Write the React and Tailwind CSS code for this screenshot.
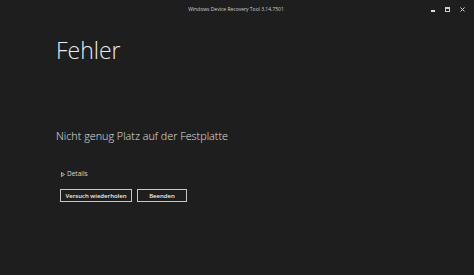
export default function App() {
  return (
    <div className="w-[474px] h-[275px] bg-[#1e1e1e] text-[#e6e6e6] relative overflow-hidden" style={{ fontFamily: '"Open Sans", "Noto Sans", sans-serif' }}>
      <div className="h-[20px] flex items-center justify-center relative">
        <span className="text-[5px] text-[#cfcfcf] mt-[-1px] ml-[-2px]">Windows Device Recovery Tool 3.14.7501</span>
        <div className="absolute right-[9px] top-[7px] flex items-center gap-[10px]">
          <div className="w-[4px] h-[1.5px] bg-[#dcdcdc] mt-[3px]"></div>
          <div className="w-[5px] h-[5px] border border-[#cfcfcf] border-t-2"></div>
          <svg width="5" height="5" viewBox="0 0 5 5"><path d="M0.5 0.5L4.5 4.5M4.5 0.5L0.5 4.5" stroke="#d0d0d0" strokeWidth="1" /></svg>
        </div>
      </div>
      <div className="pl-[56px]">
        <div className="mt-[14px] text-[23px] font-light leading-[32px] text-[#ececec]">Fehler</div>
        <div className="mt-[62px] text-[10.8px] font-light leading-[16px] text-[#e0e0e0]">Nicht genug Platz auf der Festplatte</div>
        <div className="mt-[25px] ml-[5px] flex items-center gap-[2px] text-[6.5px] leading-[10px] text-[#d8d8d8]">
          <svg width="4" height="5" viewBox="0 0 4 5"><path d="M0.5 0.5L3.5 2.5L0.5 4.5Z" fill="none" stroke="#d8d8d8" strokeWidth="0.8" /></svg>
          <span>Details</span>
        </div>
        <div className="mt-[10px] ml-[4px] flex gap-[5px]">
          <button className="w-[72px] h-[13px] border border-[#c8c8c8] text-[6px] font-semibold text-[#f0f0f0] flex items-center justify-center leading-none">Versuch wiederholen</button>
          <button className="w-[50px] h-[13px] border border-[#c8c8c8] text-[6px] font-semibold text-[#f0f0f0] flex items-center justify-center leading-none">Beenden</button>
        </div>
      </div>
    </div>
  );
}
